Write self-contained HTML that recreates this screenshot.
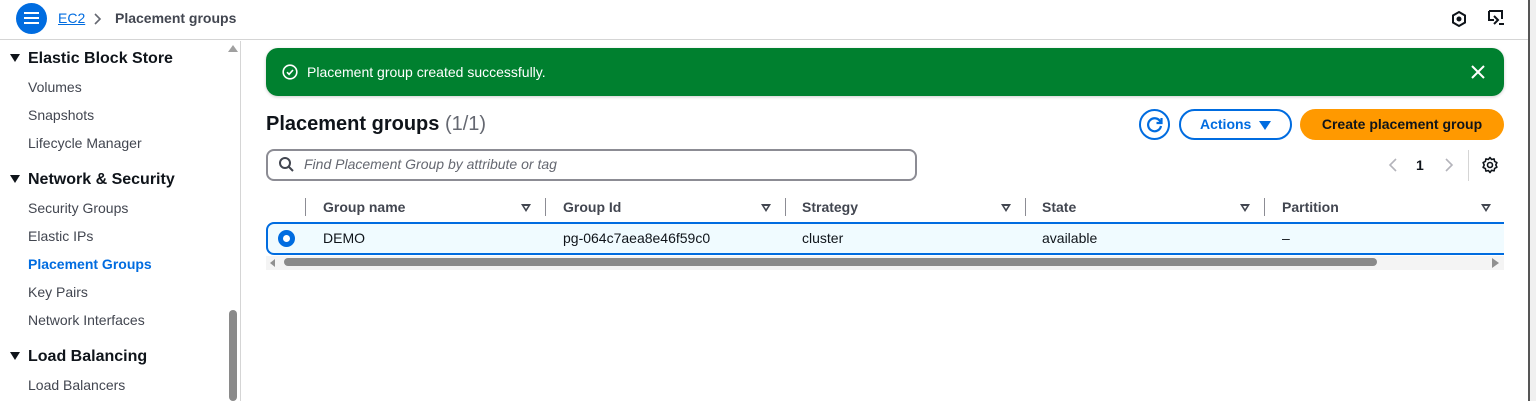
<!DOCTYPE html>
<html><head><meta charset="utf-8"><style>
*{box-sizing:border-box;margin:0;padding:0}
body{width:1536px;height:401px;overflow:hidden;background:#fff;font-family:"Liberation Sans",sans-serif;color:#0f141a;position:relative;font-size:14px}
.abs{position:absolute}
.top{left:0;top:0;width:1528px;height:40px;border-bottom:1px solid #d5d5d5;background:#fff}
.burger{left:16px;top:3px;width:31px;height:31px;border-radius:50%;background:#006ce0}
.side{left:0;top:41px;width:241px;height:360px;border-right:1px solid #d5d5d5}
.sh{font-weight:bold;font-size:16px;left:10px}
.si{left:28px;font-size:14px;color:#424650}
.tri{display:inline-block;width:0;height:0;border-left:5px solid transparent;border-right:5px solid transparent;border-top:8px solid #0f141a;margin-right:8px;vertical-align:1px}
.th{top:199px;font-weight:bold;color:#424650;font-size:14px}
.sep{top:198px;width:1px;height:18px;background:#8c8c94}
.dt{top:198px;width:0;height:0;border-left:5px solid transparent;border-right:5px solid transparent;border-top:8px solid #424650}
.dt::after{content:"";position:absolute;left:-2px;top:-6.5px;border-left:2px solid transparent;border-right:2px solid transparent;border-top:3px solid #fff}
.td{top:230px;font-size:14px}
</style></head><body>
<div class="abs top"></div>
<div class="abs burger"><div class="abs" style="left:8px;top:9px;width:15px;height:2px;background:#fff;box-shadow:0 5px 0 #fff,0 10px 0 #fff"></div></div>
<div class="abs" style="left:58px;top:10px;color:#006ce0;text-decoration:underline;font-size:14px">EC2</div>
<svg class="abs" style="left:93px;top:12px" width="10" height="14"><path d="M2 2l5 5-5 5" fill="none" stroke="#656871" stroke-width="1.6"/></svg>
<div class="abs" style="left:115px;top:10px;font-weight:bold;color:#424650;font-size:14px">Placement groups</div>
<svg class="abs" style="left:1450px;top:10px" width="18" height="18" viewBox="0 0 18 18"><path d="M9 2l6 3.5v7L9 16l-6-3.5v-7z" fill="none" stroke="#0f141a" stroke-width="2"/><circle cx="9" cy="9" r="2.5" fill="#0f141a"/></svg>
<svg class="abs" style="left:1487px;top:9px" width="20" height="18" viewBox="0 0 20 18"><path d="M2 2h13v8M2 2v9h5" fill="none" stroke="#0f141a" stroke-width="2"/><path d="M7 7l4 4-4 4M12 15h5" fill="none" stroke="#0f141a" stroke-width="2"/></svg>
<div class="abs" style="left:1528px;top:0;width:2px;height:401px;background:#555"></div>
<div class="abs" style="left:1530px;top:0;width:6px;height:401px;background:#f0f0f0"></div>

<div class="abs side"></div>
<div class="abs sh" style="top:50px"><span class="tri"></span>Elastic Block Store</div>
<div class="abs si" style="top:79px">Volumes</div>
<div class="abs si" style="top:107px">Snapshots</div>
<div class="abs si" style="top:135px">Lifecycle Manager</div>
<div class="abs sh" style="top:171px"><span class="tri"></span>Network &amp; Security</div>
<div class="abs si" style="top:200px">Security Groups</div>
<div class="abs si" style="top:228px">Elastic IPs</div>
<div class="abs si" style="top:256px;color:#006ce0;font-weight:bold">Placement Groups</div>
<div class="abs si" style="top:284px">Key Pairs</div>
<div class="abs si" style="top:312px">Network Interfaces</div>
<div class="abs sh" style="top:348px"><span class="tri"></span>Load Balancing</div>
<div class="abs si" style="top:377px">Load Balancers</div>
<div class="abs" style="left:228px;top:45px;width:0;height:0;border-left:5px solid transparent;border-right:5px solid transparent;border-bottom:7px solid #a0a0a0"></div>
<div class="abs" style="left:229px;top:310px;width:8px;height:91px;border-radius:4px;background:#8a8a8a"></div>

<div class="abs" style="left:266px;top:48px;width:1238px;height:48px;border-radius:12px;background:#00802f;box-shadow:0 1px 3px rgba(0,0,0,.2)"></div>
<svg class="abs" style="left:282px;top:64px" width="16" height="16" viewBox="0 0 16 16"><circle cx="8" cy="8" r="6.8" fill="none" stroke="#fff" stroke-width="1.6"/><path d="M5 8.2l2.1 2.1L11 6" fill="none" stroke="#fff" stroke-width="1.6"/></svg>
<div class="abs" style="left:307px;top:64px;color:#fff;font-size:14px">Placement group created successfully.</div>
<svg class="abs" style="left:1471px;top:65px" width="14" height="14"><path d="M1 1l12 12M13 1L1 13" stroke="#fff" stroke-width="2"/></svg>

<div class="abs" style="left:266px;top:113px;font-size:20px;font-weight:bold">Placement groups <span style="font-weight:normal;color:#656871">(1/1)</span></div>
<div class="abs" style="left:1139px;top:109px;width:31px;height:31px;border:2px solid #006ce0;border-radius:50%"></div>
<svg class="abs" style="left:1145px;top:115px" width="20" height="20" viewBox="0 0 20 20"><path d="M15.5 7A6.5 6.5 0 1 0 16 11" fill="none" stroke="#006ce0" stroke-width="2.2"/><path d="M16.5 3v5h-5" fill="none" stroke="#006ce0" stroke-width="2.2"/></svg>
<div class="abs" style="left:1179px;top:109px;width:113px;height:31px;border:2px solid #006ce0;border-radius:16px"></div>
<div class="abs" style="left:1200px;top:116px;color:#006ce0;font-weight:bold;font-size:14px">Actions</div>
<div class="abs" style="left:1259px;top:121px;width:0;height:0;border-left:6px solid transparent;border-right:6px solid transparent;border-top:9px solid #006ce0"></div>
<div class="abs" style="left:1300px;top:109px;width:204px;height:31px;border-radius:16px;background:#ff9900"></div>
<div class="abs" style="left:1300px;top:116px;width:204px;text-align:center;font-weight:bold;font-size:14px">Create placement group</div>

<div class="abs" style="left:266px;top:149px;width:651px;height:32px;border:2px solid #8c8c94;border-radius:8px"></div>
<svg class="abs" style="left:278px;top:156px" width="18" height="18"><circle cx="7" cy="7" r="5" fill="none" stroke="#424650" stroke-width="2"/><path d="M11 11l4 4" stroke="#424650" stroke-width="2"/></svg>
<div class="abs" style="left:304px;top:156px;font-style:italic;color:#656871;font-size:14px">Find Placement Group by attribute or tag</div>
<svg class="abs" style="left:1388px;top:157px" width="10" height="16"><path d="M8 2L2 8l6 6" fill="none" stroke="#b4b4bb" stroke-width="1.6"/></svg>
<div class="abs" style="left:1416px;top:157px;font-weight:bold;font-size:14px">1</div>
<svg class="abs" style="left:1444px;top:157px" width="10" height="16"><path d="M2 2l6 6-6 6" fill="none" stroke="#b4b4bb" stroke-width="1.6"/></svg>
<div class="abs" style="left:1468px;top:150px;width:1px;height:31px;background:#d5d5d5"></div>
<svg class="abs" style="left:1481px;top:156px" width="18" height="18" viewBox="0 0 18 18"><path d="M9 1.5l1.6 2 2.5-.6.5 2.5 2.3 1.2-1.1 2.3 1.1 2.3-2.3 1.2-.5 2.5-2.5-.6L9 16.5l-1.6-2-2.5.6-.5-2.5-2.3-1.2L3.2 9 2.1 6.6l2.3-1.2.5-2.5 2.5.6z" fill="none" stroke="#0f141a" stroke-width="1.6" stroke-linejoin="round"/><circle cx="9" cy="9" r="2.5" fill="none" stroke="#0f141a" stroke-width="1.6"/></svg>

<div class="abs sep" style="left:305px"></div>
<div class="abs th" style="left:323px">Group name</div><div class="abs dt" style="left:521px;top:204px"></div>
<div class="abs sep" style="left:545px"></div>
<div class="abs th" style="left:563px">Group Id</div><div class="abs dt" style="left:761px;top:204px"></div>
<div class="abs sep" style="left:785px"></div>
<div class="abs th" style="left:802px">Strategy</div><div class="abs dt" style="left:1001px;top:204px"></div>
<div class="abs sep" style="left:1025px"></div>
<div class="abs th" style="left:1042px">State</div><div class="abs dt" style="left:1240px;top:204px"></div>
<div class="abs sep" style="left:1264px"></div>
<div class="abs th" style="left:1282px">Partition</div><div class="abs dt" style="left:1481px;top:204px"></div>

<div class="abs" style="left:266px;top:222px;width:1238px;height:33px;background:#f0fbff;border:2px solid #006ce0;border-right:none;border-radius:8px 0 0 8px"></div>
<div class="abs" style="left:278px;top:230px;width:17px;height:17px;border-radius:50%;border:5px solid #006ce0;background:#fff"></div>
<div class="abs td" style="left:323px">DEMO</div>
<div class="abs td" style="left:563px">pg-064c7aea8e46f59c0</div>
<div class="abs td" style="left:802px">cluster</div>
<div class="abs td" style="left:1042px">available</div>
<div class="abs td" style="left:1282px">–</div>
<div class="abs" style="left:266px;top:256px;width:1238px;height:14px;background:#f4f4f4"></div>
<div class="abs" style="left:270px;top:259px;width:0;height:0;border-top:4px solid transparent;border-bottom:4px solid transparent;border-right:5px solid #909090"></div>
<div class="abs" style="left:284px;top:258px;width:1093px;height:8px;border-radius:4px;background:#8a8a8a"></div>
<div class="abs" style="left:1492px;top:258px;width:0;height:0;border-top:5px solid transparent;border-bottom:5px solid transparent;border-left:7px solid #909090"></div>
</body></html>
